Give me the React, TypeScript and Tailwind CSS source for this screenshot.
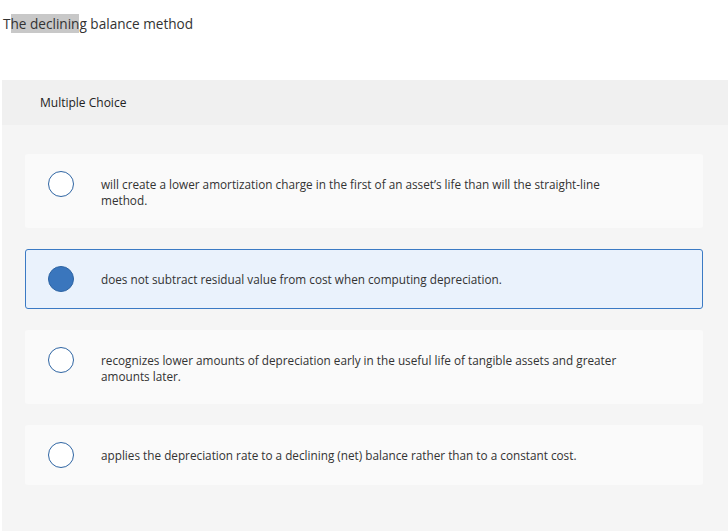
import React from "react";

const options = [
  { text: "will create a lower amortization charge in the first of an asset’s life than will the straight-line method.", selected: false },
  { text: "does not subtract residual value from cost when computing depreciation.", selected: true },
  { text: "recognizes lower amounts of depreciation early in the useful life of tangible assets and greater amounts later.", selected: false },
  { text: "applies the depreciation rate to a declining (net) balance rather than to a constant cost.", selected: false },
];

export default function App() {
  return (
    <div className="w-[728px] h-[531px] bg-white overflow-hidden flex flex-col" style={{ fontFamily: '"Open Sans", "Liberation Sans", sans-serif' }}>
      <div className="h-[80px] pl-[3px] pt-[14px] text-[13.6px] text-[#333] leading-[20px]">
        <span>T</span>
        <span className="bg-[#c8c8c8]">he declinin</span>
        <span>g balance method</span>
      </div>
      <div className="ml-[2px] flex-1 flex flex-col bg-[#f5f5f5]">
        <div className="h-[45px] bg-[#f0f0f0] pl-[38px] flex items-center text-[12px] text-[#222]">
          Multiple Choice
        </div>
        <div className="pt-[29px] pl-[23px] pr-[25px] flex flex-col gap-[21px]">
          {options.map((o, i) => (
            <div
              key={i}
              className={
                o.selected
                  ? "flex items-start rounded-[3px] border border-[#3b7ac4] bg-[#eaf2fc] py-[16px] pl-[22px] pr-[40px]"
                  : "flex items-start rounded-[3px] bg-[#fafafa] py-[17px] pl-[23px] pr-[40px]"
              }
            >
              {o.selected ? (
                <div className="w-[26px] h-[26px] shrink-0 rounded-full bg-[#3a76bd] border-[1.5px] border-[#2d64a3]" />
              ) : (
                <div className="w-[26px] h-[26px] shrink-0 rounded-full bg-white border-[1.5px] border-[#2f65a3]" />
              )}
              <div className="ml-[27px] mt-[5px] mb-[3px] text-[11.75px] leading-[16px] text-[#333] w-[530px]">
                {o.text}
              </div>
            </div>
          ))}
        </div>
      </div>
    </div>
  );
}
